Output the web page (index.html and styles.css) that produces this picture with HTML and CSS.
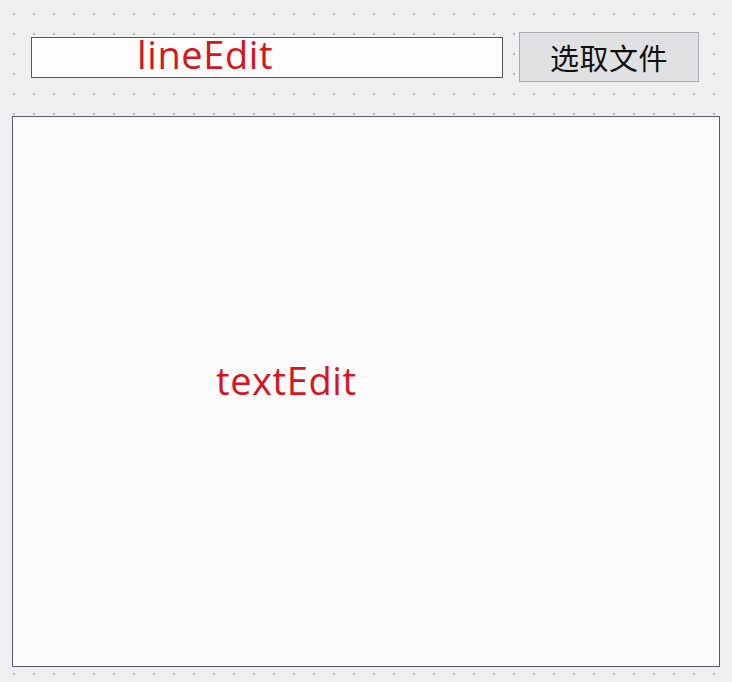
FILE: index.html
```html
<!DOCTYPE html>
<html lang="zh-CN">
  <head>
    <meta charset="UTF-8" />
    <meta name="viewport" content="width=device-width, initial-scale=1.0" />
    <title>Form</title>
    <link rel="stylesheet" href="styles.css">
  </head>
  <body>
    <div class="form">
      <!-- top row: line edit + file button -->
      <div class="row">
        <div class="line-edit">
          <span class="tag">lineEdit</span>
        </div>
        <button type="button" class="btn">选取文件</button>
      </div>

      <!-- big text area -->
      <div class="text-edit">
        <span class="tag">textEdit</span>
      </div>
    </div>
  </body>
</html>
```

FILE: styles.css
```css
* {
  box-sizing: border-box;
  margin: 0;
  padding: 0;
}

:root {
  --background: #efeff1;
  --dot: #b4b4bc;
  --red: #d8141c;
}

body {
  min-height: 100vh;
  font-family: 'Open Sans', 'Noto Sans CJK SC', sans-serif;
  background-color: var(--background);
  background-image: radial-gradient(circle, var(--dot) 0.8px, transparent 1.3px);
  background-size: 20px 20px;
  background-position: 4px 4px;
}

.form {
  display: flex;
  flex-direction: column;
  padding: 32px 13px 0 12px;
}

.row {
  display: flex;
  align-items: center;
  gap: 16px;
  margin-left: 19px;
  height: 50px;
}

.tag {
  color: var(--red);
  font-size: 38px;
  line-height: 1;
  letter-spacing: 0.6px;
}

.line-edit {
  width: 472px;
  height: 41px;
  background-color: #fdfdfe;
  border: 1px solid #55555c;
  padding-left: 105px;
  display: flex;
  align-items: flex-end;
  padding-bottom: 4px;
}

.btn {
  width: 180px;
  height: 50px;
  background-color: #e1e1e3;
  border: 1px solid #a8a8ae;
  font-family: 'Noto Sans CJK SC', sans-serif;
  font-size: 29px;
  color: #111;
  letter-spacing: 0.5px;
}

.text-edit {
  margin-top: 34px;
  width: 708px;
  height: 551px;
  background-color: #fcfcfe;
  border: 1px solid #5a5570;
  padding: 244px 0 0 203px;
}
```
